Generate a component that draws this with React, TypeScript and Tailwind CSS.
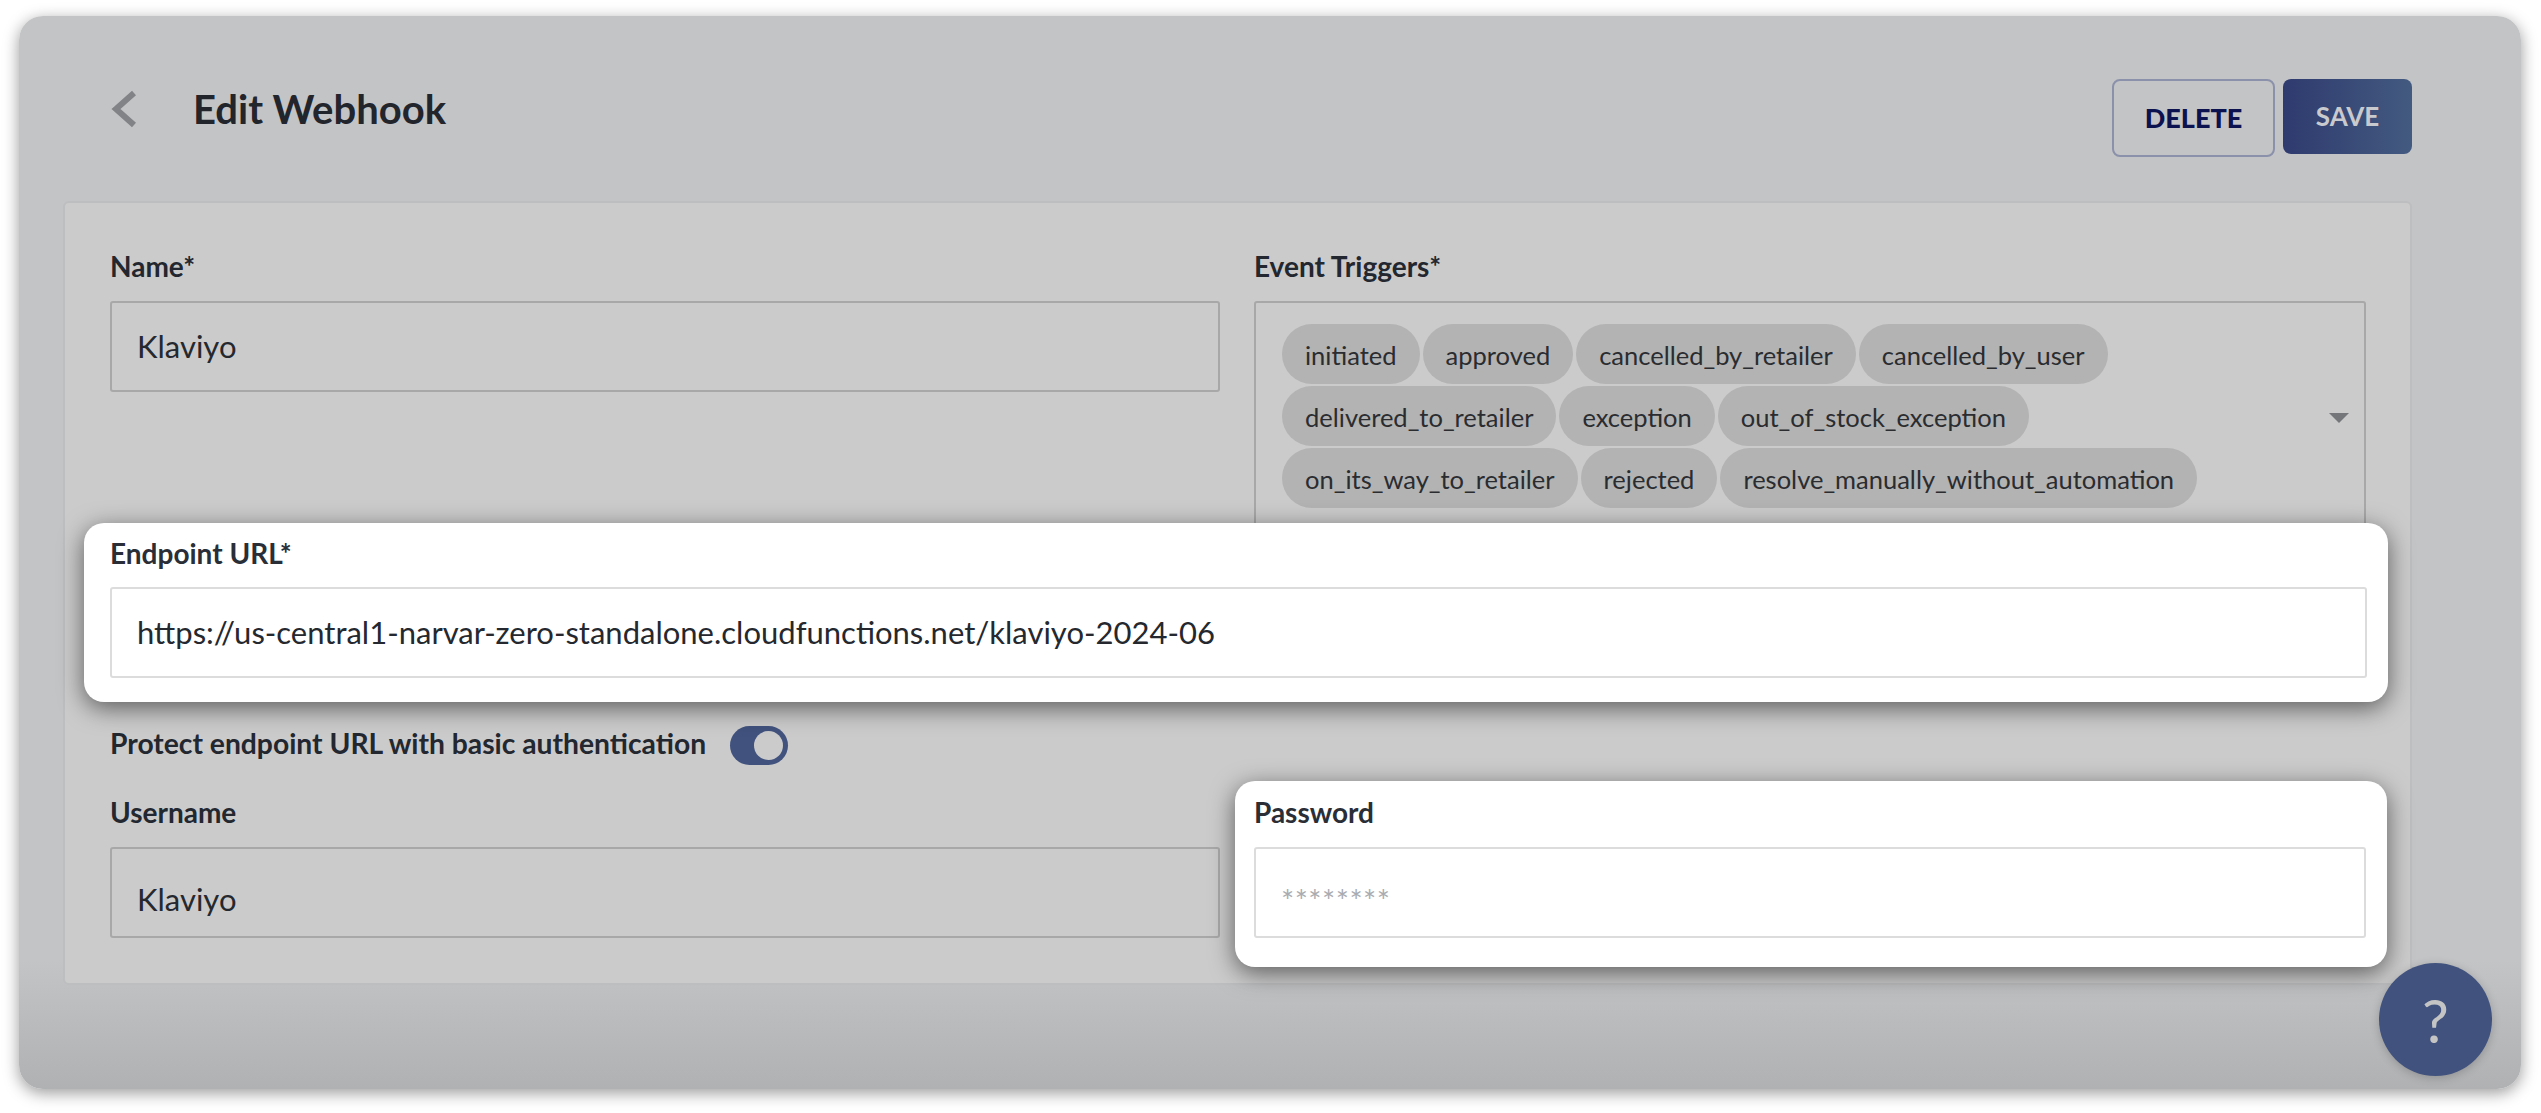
const font = "[font-family:Lato,'Noto_Sans',sans-serif]";

function Label({ children }: { children: React.ReactNode }) {
  return <div className="h-[34px] mb-[18px] text-[28px] leading-[34px] font-bold text-[#23272f]">{children}</div>;
}

function Field({ value, light, muted, low }: { value: string; light?: boolean; muted?: boolean; low?: boolean }) {
  return (
    <div
      className={`h-[91px] flex items-center pl-[25px] rounded-[3px] border-2 text-[31px] ${
        light ? "border-[#dcdcdc] bg-white" : "border-[#a8a8a8] bg-[#cbcbcb]"
      } ${muted ? "text-[#a9abb0] tracking-[0.5px] pt-[16px]" : "text-[#25282e]"} ${low ? "pt-[14px]" : ""}`}
    >
      {value}
    </div>
  );
}

const rows = [
  ["initiated", "approved", "cancelled_by_retailer", "cancelled_by_user"],
  ["delivered_to_retailer", "exception", "out_of_stock_exception"],
  ["on_its_way_to_retailer", "rejected", "resolve_manually_without_automation"],
];

export default function App() {
  return (
    <div className={`w-[2541px] h-[1113px] bg-white pt-[16px] pl-[19px] overflow-hidden ${font}`}>
      <div className="relative w-[2502px] h-[1073px] rounded-[24px] bg-gradient-to-b from-[#c3c4c6] from-88% to-[#b0b1b3] shadow-[0_4px_16px_rgba(0,0,0,0.4)] pl-[44px] pr-[109px]">
        <div className="h-[185px] pt-[63px] pl-[47px] flex justify-between items-start">
          <div className="flex items-center h-[60px]">
            <svg width="28" height="38" viewBox="0 0 28 38" fill="none" className="mr-[55px]">
              <path d="M24 3 L6 19 L24 35" stroke="#828386" strokeWidth="6" />
            </svg>
            <h1 className="text-[40px] font-bold text-[#22252c]">Edit Webhook</h1>
          </div>
          <div className="flex gap-2 items-start">
            <button className="w-[163px] h-[78px] rounded-[8px] border-2 border-[#8b90ab] text-[27px] font-black text-[#0c1150]">
              DELETE
            </button>
            <button className="w-[129px] h-[75px] rounded-[8px] bg-gradient-to-r from-[#2f3a6e] to-[#435a80] text-[26px] font-bold text-[#c9cacd]">
              SAVE
            </button>
          </div>
        </div>

        <div className="h-[784px] rounded-[6px] border-2 border-[#bdbebf] bg-[#cbcbcb] pt-[46px] pl-[45px] pr-[43px]">
          <div className="grid grid-cols-[1110px_1112px] gap-x-[34px] h-[274px]">
            <div>
              <Label>Name*</Label>
              <Field value="Klaviyo" />
            </div>
            <div>
              <Label>Event Triggers*</Label>
              <div className="relative h-[260px] rounded-[3px] border-2 border-[#a8a8a8] pl-[26px] pt-[21px]">
                <div className="flex flex-col gap-[2px]">
                  {rows.map((row) => (
                    <div key={row[0]} className="flex gap-[3px]">
                      {row.map((chip) => (
                        <span key={chip} className="h-[60px] flex items-center px-[23px] pt-[2px] rounded-[30px] bg-[#b3b3b3] text-[25.5px] text-[#2a2c30]">
                          {chip}
                        </span>
                      ))}
                    </div>
                  ))}
                </div>
                <div className="absolute right-[15px] top-[110px] w-0 h-0 border-x-[10px] border-x-transparent border-t-[10px] border-t-[#75767a]" />
              </div>
            </div>
          </div>

          <div className="relative z-10 -ml-[26px] -mr-[21px] h-[179px] pt-[13px] pl-[26px] pr-[21px] rounded-[20px] bg-white shadow-[0_6px_24px_rgba(0,0,0,0.55)]">
            <div className="h-[34px] mb-[17px] text-[28px] leading-[34px] font-bold text-[#2a2e37]">Endpoint URL*</div>
            <Field light value="https://us-central1-narvar-zero-standalone.cloudfunctions.net/klaviyo-2024-06" />
          </div>

          <div className="flex items-center h-[39px] mt-[24px] mb-[16px]">
            <span className="text-[28.25px] font-bold text-[#23272f] -translate-y-[2px]">Protect endpoint URL with basic authentication</span>
            <span className="ml-[24px] w-[58px] h-[39px] rounded-full bg-[#40527d] flex items-center justify-end pr-[5px]">
              <span className="w-[29px] h-[29px] rounded-full bg-[#cbcbcb]" />
            </span>
          </div>

          <div className="grid grid-cols-[1110px_1112px] gap-x-[34px]">
            <div className="pt-[14px]">
              <Label>Username</Label>
              <Field low value="Klaviyo" />
            </div>
            <div className="relative z-10 -ml-[19px] -mr-[21px] h-[186px] pt-[14px] pl-[19px] pr-[21px] rounded-[20px] bg-white shadow-[0_6px_24px_rgba(0,0,0,0.55)]">
              <div className="h-[34px] mb-[18px] text-[28px] leading-[34px] font-bold text-[#2a2e37]">Password</div>
              <Field light muted value="********" />
            </div>
          </div>
        </div>

        <div className="absolute z-20 left-[2360px] top-[947px] w-[113px] h-[113px] rounded-full bg-[#40527d] flex items-center justify-center text-[60px] text-[#c4c4c4] shadow-[0_2px_10px_rgba(0,0,0,0.2)]">
          ?
        </div>
      </div>
    </div>
  );
}
